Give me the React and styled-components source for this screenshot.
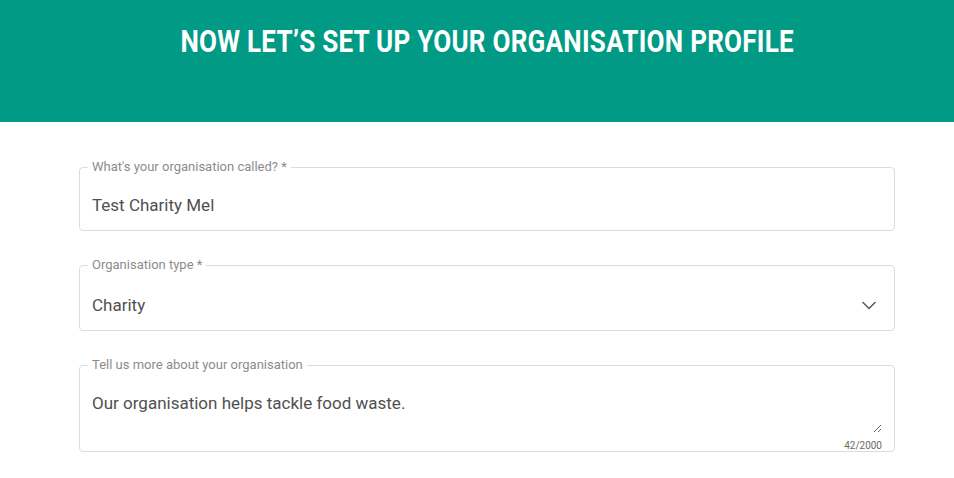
import React from "react";
import styled, { createGlobalStyle } from "styled-components";

const Global = createGlobalStyle`
  html, body { margin: 0; padding: 0; background: #fff; }
  body { font-family: Roboto, "Liberation Sans", sans-serif; }
  * { box-sizing: border-box; }
`;

const Header = styled.header`
  height: 122px;
  background: #009a85;
  display: flex;
  justify-content: center;
  padding: 25px 0 0 20px;
`;

const Title = styled.h1`
  margin: 0;
  color: #fff;
  font-family: Roboto, "Liberation Sans", sans-serif;
  font-weight: 700;
  font-size: 31px;
  line-height: 34px;
  letter-spacing: 0.3px;
  text-transform: uppercase;
  white-space: nowrap;
  transform: scaleX(0.84);
`;

const Form = styled.form`
  display: flex;
  flex-direction: column;
  gap: 27px;
  padding: 38px 59px 0 79px;
`;

const Field = styled.fieldset`
  margin: 0;
  padding: 0 12px;
  border: 1px solid #dcdcdc;
  border-radius: 4px;
  min-width: 0;
  height: ${(p) => p.$h}px;
  display: flex;
  flex-direction: column;
`;

const Legend = styled.legend`
  padding: 0 4px;
  margin-left: -4px;
  font-size: 13px;
  line-height: 14px;
  color: #8c8c8c;
`;

const Value = styled.div`
  font-size: 17px;
  line-height: 20px;
  color: #505050;
  margin-top: ${(p) => p.$mt}px;
  display: flex;
  align-items: center;
  justify-content: space-between;
`;

const Chevron = styled.svg`
  width: 16px;
  height: 10px;
  margin-right: 5px;
  flex: none;
`;

const TextArea = styled.textarea`
  display: block;
  width: 100%;
  height: 40px;
  margin: 21px 0 0;
  padding: 0;
  border: none;
  outline: none;
  resize: vertical;
  font: inherit;
  font-size: 17px;
  line-height: 20px;
  color: #505050;
  background: transparent;
`;

const Counter = styled.div`
  margin-top: 7px;
  text-align: right;
  font-size: 10px;
  line-height: 11px;
  color: #6a6a6a;
`;

export default function App() {
  return (
    <>
      <Global />
      <Header>
        <Title>Now let’s set up your organisation profile</Title>
      </Header>
      <Form>
        <Field $h={71}>
          <Legend>What's your organisation called? *</Legend>
          <Value $mt={21}>Test Charity Mel</Value>
        </Field>
        <Field $h={73}>
          <Legend>Organisation type *</Legend>
          <Value $mt={23}>
            Charity
            <Chevron viewBox="0 0 16 10">
              <path d="M1.5 2 L8 8.5 L14.5 2" fill="none" stroke="#555" strokeWidth="1.4" />
            </Chevron>
          </Value>
        </Field>
        <Field $h={94}>
          <Legend>Tell us more about your organisation</Legend>
          <TextArea readOnly defaultValue="Our organisation helps tackle food waste." />
          <Counter>42/2000</Counter>
        </Field>
      </Form>
    </>
  );
}
